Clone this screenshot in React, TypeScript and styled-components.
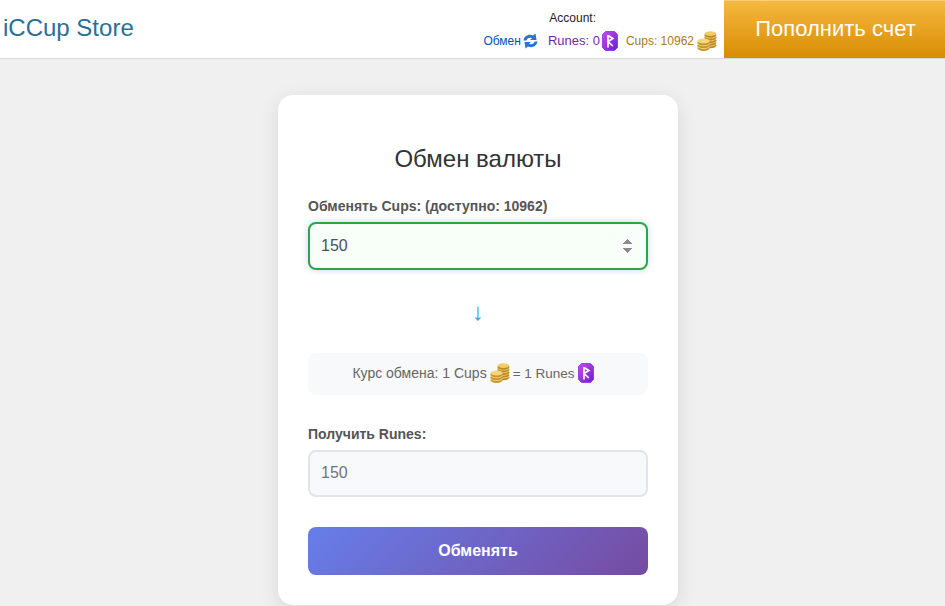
import React from 'react'
import styled, { createGlobalStyle } from 'styled-components'

const GlobalStyle = createGlobalStyle`
  html, body {
    margin: 0;
    padding: 0;
    background: #f0f0f0;
    font-family: "Liberation Sans", Arial, sans-serif;
  }
  * {
    box-sizing: border-box;
  }
`

const Page = styled.div`
  height: 606px;
  overflow: hidden;
`

const Header = styled.header`
  display: flex;
  align-items: stretch;
  height: 59px;
  background: #fff;
  border-bottom: 1px solid #d8d8d8;
`

const Logo = styled.a`
  flex: 1;
  padding-left: 3px;
  font-size: 24px;
  line-height: 56px;
  color: #2a6f97;
  text-decoration: none;
`

const Account = styled.div`
  display: flex;
  flex-direction: column;
  align-items: flex-end;
  margin-right: 7px;
  padding-top: 11px;
  font-size: 12px;
`

const AccountTitle = styled.div`
  height: 14px;
  line-height: 14px;
  margin-right: 121px;
  color: #222;
`

const AccountRow = styled.div`
  display: flex;
  align-items: center;
  height: 30px;
  padding-top: 1px;
`

const Stat = styled.span<{ $color: string; $gap: number; $size: number; $inner: number }>`
  display: flex;
  align-items: center;
  gap: ${(p) => p.$inner}px;
  margin-right: ${(p) => p.$gap}px;
  font-size: ${(p) => p.$size}px;
  color: ${(p) => p.$color};
`

const TopUp = styled.button`
  width: 221px;
  height: 58px;
  border: 0;
  border-top: 1px solid #f9cf7c;
  padding: 0 0 2px 2px;
  font: 400 22px "Liberation Sans", Arial, sans-serif;
  color: #fff;
  background: linear-gradient(180deg, #f5b840 0%, #d88c02 100%);
`

const Main = styled.main`
  display: flex;
  justify-content: center;
  padding: 36px 0 0 11px;
`

const Card = styled.section`
  display: flex;
  flex-direction: column;
  width: 400px;
  height: 510px;
  padding: 49px 30px 30px;
  background: #fff;
  border-radius: 15px;
  box-shadow: 0 5px 20px rgba(0, 0, 0, 0.1);
`

const Title = styled.h2`
  margin: 0 0 24px;
  height: 30px;
  font-size: 24px;
  font-weight: 400;
  line-height: 30px;
  text-align: center;
  color: #333;
`

const Label = styled.label`
  display: block;
  height: 16px;
  margin-bottom: 8px;
  font-size: 14px;
  font-weight: 700;
  line-height: 16px;
  color: #555;
`

const Input = styled.input<{ $active?: boolean }>`
  display: block;
  width: 100%;
  height: 48px;
  padding: 0 11px;
  font: 400 16px "Liberation Sans", Arial, sans-serif;
  color: ${(p) => (p.$active ? '#495057' : '#6c757d')};
  border-radius: 8px;
  outline: none;
  border: 2px solid ${(p) => (p.$active ? '#28a745' : '#e1e5e9')};
  background: ${(p) => (p.$active ? '#f8fff9' : '#f8f9fa')};
  box-shadow: ${(p) => (p.$active ? '0 0 6px rgba(102, 126, 234, 0.35)' : 'none')};
  &::-webkit-inner-spin-button {
    opacity: ${(p) => (p.$active ? 1 : 0)};
  }
`

const Arrow = styled.div`
  height: 83px;
  font-size: 24px;
  line-height: 84px;
  text-align: center;
  color: #3498db;
`

const Rate = styled.div`
  display: flex;
  align-items: center;
  justify-content: center;
  gap: 3px;
  height: 42px;
  margin-bottom: 31px;
  padding: 0 10px 1px 0;
  font-size: 14px;
  color: #666;
  background: #f8f9fa;
  border-radius: 8px;
`

const RateUnit = styled.span`
  font-size: 13.5px;
`

const Submit = styled.button`
  height: 48px;
  margin-top: 30px;
  border: 0;
  border-radius: 8px;
  font: 700 16px "Liberation Sans", Arial, sans-serif;
  color: #fff;
  background: linear-gradient(135deg, #667eea 0%, #764ba2 100%);
`

function Coins() {
  return (
    <svg width="20" height="20" viewBox="0 0 20 20">
      {[12, 9.4, 6.8, 4.2, 1.6].map((y) => (
        <g key={y}>
          <ellipse cx="13.4" cy={y + 2.4} rx="6" ry="2.8" fill="#b98a2c" />
          <ellipse cx="13.4" cy={y + 1} rx="5.8" ry="2.4" fill="#f3cb68" />
        </g>
      ))}
      {[15.4, 12.6, 9.8].map((y) => (
        <g key={y}>
          <ellipse cx="6.6" cy={y + 1.6} rx="6.2" ry="2.9" fill="#c7952f" />
          <ellipse cx="6.6" cy={y + 0.2} rx="6" ry="2.5" fill="#f7d679" />
        </g>
      ))}
    </svg>
  )
}

function Rune() {
  return (
    <svg width="16" height="20" viewBox="0 0 16 20">
      <defs>
        <linearGradient id="runeFill" x1="0" y1="0" x2="1" y2="1">
          <stop offset="0" stopColor="#c64be8" />
          <stop offset="1" stopColor="#6a1fd6" />
        </linearGradient>
      </defs>
      <path d="M3.5 0.5H12.5L15.5 3.5V16.5L12.5 19.5H3.5L0.5 16.5V3.5Z" fill="url(#runeFill)" stroke="#9c3fe6" strokeLinejoin="round" />
      <path d="M6 4V16.5M6 4.5L10.8 7.6L6 10.5L10.8 15" fill="none" stroke="#fff" strokeWidth="1.7" />
    </svg>
  )
}

function Exchange() {
  return (
    <svg width="15" height="16" viewBox="0 0 15 16">
      <path d="M0.5 7.5C1 3 6 0.5 10 2.6L12.5 0.5L13.5 7H7L9 5.2C6.5 4 4 5.2 3.5 7.5Z" fill="#2f6fd6" />
      <path d="M14.5 8.5C14 13 9 15.5 5 13.4L2.5 15.5L1.5 9H8L6 10.8C8.5 12 11 10.8 11.5 8.5Z" fill="#2f6fd6" />
    </svg>
  )
}

export default function App() {
  return (
    <Page>
      <GlobalStyle />
      <Header>
        <Logo href="#">iCCup Store</Logo>
        <Account>
          <AccountTitle>Account:</AccountTitle>
          <AccountRow>
            <Stat $color="#0b4fb3" $gap={10} $size={12} $inner={2}>
              Обмен <Exchange />
            </Stat>
            <Stat $color="#7a1fa2" $gap={8} $size={13} $inner={2}>
              Runes: 0 <Rune />
            </Stat>
            <Stat $color="#a9791a" $gap={0} $size={12} $inner={3}>
              Cups: 10962 <Coins />
            </Stat>
          </AccountRow>
        </Account>
        <TopUp>Пополнить счет</TopUp>
      </Header>
      <Main>
        <Card>
          <Title>Обмен валюты</Title>
          <Label>Обменять Cups: (доступно: 10962)</Label>
          <Input type="number" defaultValue={150} $active />
          <Arrow>↓</Arrow>
          <Rate>
            Курс обмена: 1 Cups <Coins /> <RateUnit>= 1 Runes</RateUnit> <Rune />
          </Rate>
          <Label>Получить Runes:</Label>
          <Input type="number" defaultValue={150} readOnly />
          <Submit>Обменять</Submit>
        </Card>
      </Main>
    </Page>
  )
}
